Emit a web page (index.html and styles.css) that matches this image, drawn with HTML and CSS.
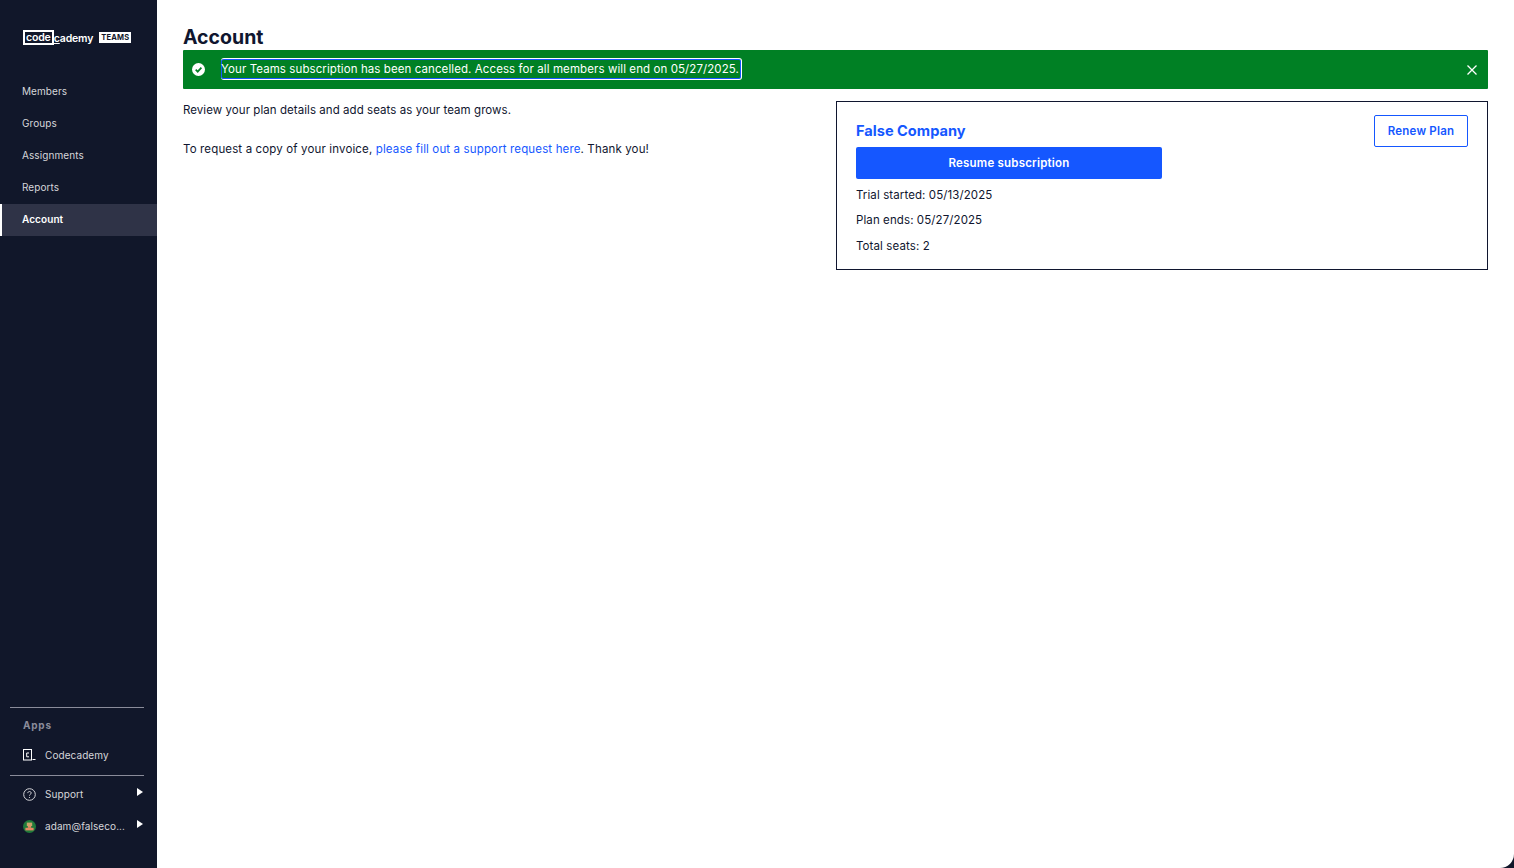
FILE: index.html
```html
<!DOCTYPE html>
<html lang="en">
<head>
<meta charset="utf-8">
<title>Account</title>
<link rel="stylesheet" href="styles.css">
</head>
<body>
<div class="app">
  <aside class="sidebar">
    <div class="logo">
      <span class="logo-code">code</span><span class="logo-rest"><span class="logo-c">c</span>ademy</span>
      <span class="logo-teams">TEAMS</span>
    </div>
    <nav class="nav">
      <a class="nav-item">Members</a>
      <a class="nav-item">Groups</a>
      <a class="nav-item">Assignments</a>
      <a class="nav-item">Reports</a>
      <a class="nav-item active">Account</a>
    </nav>
    <div class="side-bottom">
      <div class="apps">
        <div class="apps-title">Apps</div>
        <div class="side-row">
          <svg class="side-icon" width="13" height="12" viewBox="0 0 13 12" fill="none"><rect x="0.5" y="0.5" width="8" height="10.5" stroke="#fff"/><path d="M6 4H3.7v3.8H6" stroke="#fff"/><path d="M9.5 10.5H12.5" stroke="#fff"/></svg>
          <span>Codecademy</span>
        </div>
      </div>
      <div class="account-links">
        <div class="side-row">
          <svg class="side-icon" width="13" height="13" viewBox="0 0 13 13" fill="none"><circle cx="6.5" cy="6.5" r="5.8" stroke="#d6d6da"/><path d="M4.8 5.1c0-1 .8-1.6 1.7-1.6s1.7.6 1.7 1.5c0 1.3-1.7 1.3-1.7 2.6" stroke="#d6d6da"/><circle cx="6.5" cy="9.5" r=".6" fill="#d6d6da"/></svg>
          <span class="side-label">Support</span>
          <span class="caret"></span>
        </div>
        <div class="side-row">
          <svg class="side-icon" width="13" height="13" viewBox="0 0 13 13"><circle cx="6.5" cy="6.5" r="6.5" fill="#1f7a3a"/><rect x="3.8" y="2.6" width="5.4" height="3.4" fill="#c9a26a"/><rect x="4.8" y="5.8" width="3.4" height="2" fill="#e58a63"/><rect x="2.4" y="7.8" width="8.2" height="2.6" fill="#e58a63"/></svg>
          <span class="side-label">adam@falseco...</span>
          <span class="caret"></span>
        </div>
      </div>
    </div>
  </aside>
  <main class="main">
    <h1 class="title">Account</h1>
    <div class="alert">
      <svg class="alert-icon" width="13" height="13" viewBox="0 0 13 13"><circle cx="6.5" cy="6.5" r="6.5" fill="#fff"/><path d="M3.7 6.7l2 2 3.7-4" fill="none" stroke="#008024" stroke-width="1.7"/></svg>
      <span class="alert-text">Your Teams subscription has been cancelled. Access for all members will end on 05/27/2025.</span>
      <svg class="alert-close" width="10" height="10" viewBox="0 0 10 10"><path d="M.5.5l9 9M9.5.5l-9 9" stroke="#fff" stroke-width="1.3"/></svg>
    </div>
    <div class="columns">
      <section class="intro">
        <p class="intro-line">Review your plan details and add seats as your team grows.</p>
        <p class="intro-line intro-invoice">To request a copy of your invoice, <a class="link">please fill out a support request here</a>. Thank you!</p>
      </section>
      <section class="plan">
        <div class="plan-left">
          <h2 class="plan-name">False Company</h2>
          <button class="btn-primary">Resume subscription</button>
          <p class="plan-line plan-first">Trial started: 05/13/2025</p>
          <p class="plan-line">Plan ends: 05/27/2025</p>
          <p class="plan-line plan-seats">Total seats: 2</p>
        </div>
        <button class="btn-outline">Renew Plan</button>
      </section>
    </div>
  </main>
</div>
</body>
</html>
```
FILE: styles.css
```css
* { box-sizing: border-box; }
html, body { margin: 0; height: 100%; }
body {
  background: #11172a;
  font-family: "Inter", "Liberation Sans", sans-serif;
  color: #10162f;
  overflow: hidden;
}
.app { display: flex; height: 868px; width: 1514px; }
.sidebar {
  width: 157px;
  flex: none;
  background: #11172a;
  color: #d6d6da;
  display: flex;
  flex-direction: column;
  font-size: 10px;
  letter-spacing: 0.08px;
}
.logo {
  display: flex;
  align-items: center;
  height: 15px;
  margin: 30px 0 0 23px;
  color: #fff;
  font-weight: 600;
  font-size: 10.5px;
  letter-spacing: -0.15px;
}
.logo-code {
  border: 2px solid #fff;
  height: 15px;
  line-height: 12px;
  padding: 0 1px;
}
.logo-rest { padding-top: 1px; }
.logo-c { text-decoration: underline; }
.logo-teams {
  background: #fff;
  color: #11172a;
  font-size: 7.5px;
  font-weight: 700;
  height: 11px;
  line-height: 11px;
  padding: 0 2px;
  margin-left: 6px;
  letter-spacing: 0.2px;
}
.nav { display: flex; flex-direction: column; margin-top: 31px; }
.nav-item {
  height: 32px;
  display: flex;
  align-items: center;
  padding: 0 0 2px 22px;
}
.nav-item.active {
  background: #2f3347;
  border-left: 2px solid #fff;
  padding-left: 20px;
  color: #fff;
  font-weight: 600;
}
.side-bottom { margin-top: auto; padding: 0 13px 26px 10px; }
.apps { border-top: 1px solid #8a8c9a; border-bottom: 1px solid #8a8c9a; padding-bottom: 4px; }
.apps-title {
  color: #8a8c9a;
  font-weight: 700;
  letter-spacing: 0.8px;
  padding: 11px 0 0 13px;
  height: 31px;
}
.side-row {
  display: flex;
  align-items: center;
  height: 32px;
  padding-left: 13px;
  position: relative;
}
.side-icon { flex: none; margin-right: 9px; width: 13px; }
.side-label { flex: 1; }
.caret {
  width: 0;
  height: 0;
  border-left: 6px solid #fff;
  border-top: 4px solid transparent;
  border-bottom: 4px solid transparent;
  position: absolute;
  right: 1px;
  top: 10px;
}
.account-links { padding-top: 2px; }
.main {
  flex: 1;
  background: #fff;
  border-bottom-right-radius: 14px;
  padding: 24px 26px 0;
  min-width: 0;
}
.title {
  margin: 0;
  font-size: 19.5px;
  line-height: 26px;
  font-weight: 700;
  letter-spacing: 0;
}
.alert {
  display: flex;
  align-items: center;
  height: 39px;
  background: #008024;
  color: #fff;
  padding: 0 10px 0 9px;
  border-radius: 1px;
  font-size: 11.5px;
  letter-spacing: 0.09px;
}
.alert-icon { flex: none; margin-right: 16px; }
.alert-text {
  border: 1px solid #fff;
  box-shadow: inset 0 0 0 1px #1557ff;
  border-radius: 3px;
  border-left-width: 0;
  height: 22px;
  line-height: 20px;
  padding-right: 2px;
  margin-bottom: 1px;
  white-space: nowrap;
}
.alert-close { flex: none; margin-left: auto; margin-right: 1px; }
.columns { display: flex; margin-top: 12px; align-items: flex-start; }
.intro { width: 653px; flex: none; font-size: 11.5px; letter-spacing: 0.06px; }
.intro-line { margin: 0 0 20px; line-height: 19px; }
.intro-invoice { letter-spacing: 0.14px; }
.link { color: #1557ff; }
.plan {
  flex: 1;
  height: 169px;
  border: 1px solid #10162f;
  padding: 13px 19px;
  display: flex;
  justify-content: space-between;
  align-items: flex-start;
  font-size: 11.5px;
  letter-spacing: 0.1px;
}
.plan-left { width: 306px; }
.plan-name {
  margin: 6px 0 0;
  font-size: 14.6px;
  line-height: 21px;
  color: #1557ff;
  font-weight: 700;
  letter-spacing: 0;
}
.btn-primary {
  display: block;
  width: 100%;
  height: 32px;
  margin-top: 5px;
  padding: 0 0 1px;
  background: #1557ff;
  color: #fff;
  border: 0;
  border-radius: 2px;
  font: 600 11.5px "Inter", "Liberation Sans", sans-serif;
  letter-spacing: 0.2px;
}
.plan-line { margin: 0; line-height: 19px; padding-top: 6px; }
.plan-first { padding-top: 7px; }
.plan-seats { padding-top: 7px; }
.btn-outline {
  width: 94px;
  height: 32px;
  flex: none;
  padding: 0 0 1px;
  background: #fff;
  color: #1557ff;
  border: 1px solid #1557ff;
  border-radius: 2px;
  font: 600 11.5px "Inter", "Liberation Sans", sans-serif;
  letter-spacing: 0.2px;
}
```
